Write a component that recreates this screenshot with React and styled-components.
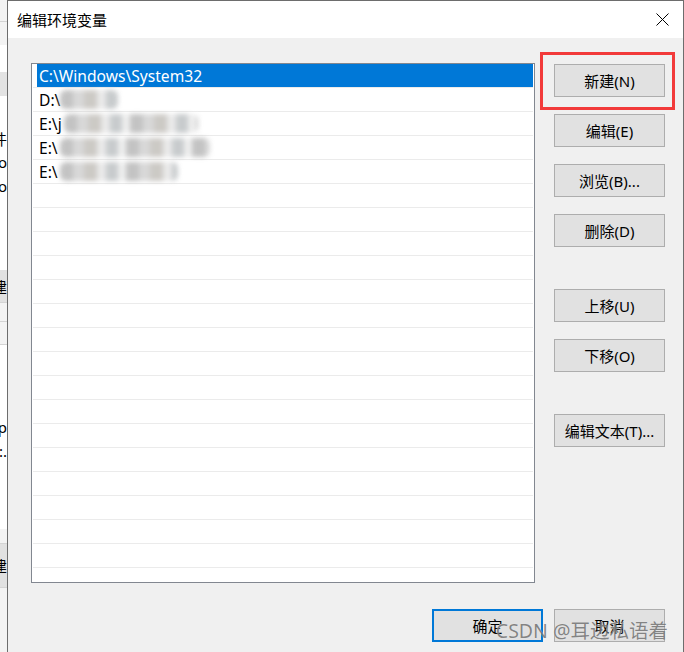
import React from "react";
import styled, { createGlobalStyle } from "styled-components";

const GlobalStyle = createGlobalStyle`
  html, body {
    margin: 0;
    padding: 0;
    background: #f0f0f0;
  }
  * {
    box-sizing: border-box;
  }
`;

const FONT = `"Noto Sans", "Noto Sans CJK SC", sans-serif`;

let Screen = styled.div`
  position: relative;
  display: flex;
  width: 684px;
  height: 652px;
  overflow: hidden;
  font-family: ${FONT};
  background: #f0f0f0;
`;

// 뒤에 깔린 창 일부
let Behind = styled.div`
  width: 7px;
  flex: none;
  display: flex;
  flex-direction: column;
  overflow: hidden;
  background: #f3f3f3;
`;

let BehindRow = styled.div`
  height: ${(props) => props.$h}px;
  flex: none;
  display: flex;
  align-items: center;
  justify-content: flex-end;
  white-space: nowrap;
  overflow: hidden;
  font-size: 15px;
  color: #000;
  background: ${(props) => props.$bg || "transparent"};
  border-bottom: ${(props) => (props.$line ? "1px solid #d4d4d4" : "none")};
`;

let Dialog = styled.div`
  flex: 1;
  display: flex;
  flex-direction: column;
  border: 1px solid #6d6d6d;
  border-bottom: none;
`;

let TitleBar = styled.div`
  height: 37px;
  flex: none;
  display: flex;
  align-items: center;
  justify-content: space-between;
  padding: 0 14px 0 9px;
  background: #fff;
`;

let Title = styled.span`
  font-size: 15px;
  color: #000;
  line-height: 1;
  margin-top: 1px;
`;

let Body = styled.div`
  flex: 1;
  display: grid;
  grid-template-columns: 504px 111px;
  grid-template-rows: 520px 33px;
  column-gap: 19px;
  row-gap: 26px;
  padding: 25px 0 0 23px;
  background: #f0f0f0;
`;

let ListBox = styled.div`
  border: 1px solid #828790;
  background: #fff;
  padding: 0 1px;
  overflow: hidden;
`;

let Row = styled.div`
  height: 24px;
  display: flex;
  padding-left: 4px;
  border-bottom: 1px solid #ebebeb;
`;

let Item = styled.div`
  flex: 1;
  display: flex;
  align-items: center;
  padding-left: 2px;
  font-size: 15.6px;
  white-space: nowrap;
  color: ${(props) => (props.$selected ? "#fff" : "#000")};
  background: ${(props) => (props.$selected ? "#0078d7" : "transparent")};
`;

let Smudge = styled.span`
  display: inline-block;
  width: ${(props) => props.$w}px;
  height: 19px;
  margin-left: ${(props) => props.$ml || 0}px;
  border-radius: 6px;
  background: repeating-linear-gradient(
    90deg,
    #b9b9b9 0 13px,
    #d2d2d2 13px 24px,
    #c4c1bc 24px 37px,
    #e6e6e6 37px 46px,
    #bfc3c5 46px 58px,
    #ececec 58px 66px
  );
  filter: blur(2.5px);
  opacity: 0.85;
`;

let ButtonColumn = styled.div`
  display: flex;
  flex-direction: column;
  gap: 17px;
  padding-top: 1px;
`;

let Marked = styled.div`
  position: relative;

  &::after {
    content: "";
    position: absolute;
    top: -12px;
    left: -14px;
    right: -10px;
    bottom: -13px;
    border: 3px solid #f23a3a;
    pointer-events: none;
  }
`;

let PushButton = styled.button`
  width: 111px;
  height: 33px;
  flex: none;
  margin-top: ${(props) => (props.$spaced ? 25 : 0)}px;
  padding: 0;
  background: #e1e1e1;
  border: ${(props) =>
    props.$primary ? "2px solid #0078d7" : "1px solid #adadad"};
  font-family: ${FONT};
  font-size: 15px;
  color: #000;
`;

let Footer = styled.div`
  grid-column: 1 / 3;
  display: flex;
  justify-content: flex-end;
  gap: 11px;
`;

let Watermark = styled.div`
  position: absolute;
  right: 16px;
  bottom: 8px;
  font-family: ${FONT};
  font-size: 19.5px;
  color: rgba(95, 95, 95, 0.75);
  text-shadow: 0 0 1px rgba(255, 255, 255, 0.6);
  pointer-events: none;
`;

const paths = [
  { text: "C:\\Windows\\System32", selected: true },
  { text: "D:\\", smudge: [58, 0] },
  { text: "E:\\j", smudge: [134, 2] },
  { text: "E:\\", smudge: [150, 2] },
  { text: "E:\\", smudge: [118, 2] },
];

const sideButtons = [
  { label: "新建(N)", marked: true },
  { label: "编辑(E)" },
  { label: "浏览(B)..." },
  { label: "删除(D)" },
  { label: "上移(U)", spaced: true },
  { label: "下移(O)" },
  { label: "编辑文本(T)...", spaced: true },
];

const behindRows = [
  { h: 22, line: true },
  { h: 23 },
  { h: 27, bg: "#fff" },
  { h: 24, bg: "#e3e3e3" },
  { h: 30, bg: "#fff" },
  { h: 24, bg: "#fff", text: "件" },
  { h: 24, bg: "#fff", text: "Lo" },
  { h: 24, bg: "#fff", text: "Lo" },
  { h: 72, bg: "#fff" },
  { h: 33, bg: "#e1e1e1", text: "建", line: true },
  { h: 19, line: true },
  { h: 23, line: true },
  { h: 70, bg: "#fff" },
  { h: 24, bg: "#fff", text: "Op" },
  { h: 24, bg: "#fff", text: ":." },
  { h: 66, bg: "#fff" },
  { h: 15, line: true },
  { h: 44, bg: "#e1e1e1", text: "建", line: true },
  { h: 40 },
];

const App = () => {
  let rows = [];
  for (let i = 0; i < 22; i++) {
    rows.push(paths[i] || { text: "" });
  }

  return (
    <>
      <GlobalStyle />
      <Screen>
        <Behind>
          {behindRows.map((r, i) => (
            <BehindRow key={i} $h={r.h} $bg={r.bg} $line={r.line}>
              {r.text}
            </BehindRow>
          ))}
        </Behind>

        <Dialog>
          <TitleBar>
            <Title>编辑环境变量</Title>
            <svg width="13" height="13" viewBox="0 0 13 13">
              <path
                d="M0.5 0.5 L12.5 12.5 M12.5 0.5 L0.5 12.5"
                stroke="#000"
                strokeWidth="1"
                fill="none"
              />
            </svg>
          </TitleBar>

          <Body>
            <ListBox>
              {rows.map((p, i) => (
                <Row key={i}>
                  <Item $selected={p.selected}>
                    {p.text}
                    {p.smudge && <Smudge $w={p.smudge[0]} $ml={p.smudge[1]} />}
                  </Item>
                </Row>
              ))}
            </ListBox>

            <ButtonColumn>
              {sideButtons.map((b) =>
                b.marked ? (
                  <Marked key={b.label}>
                    <PushButton>{b.label}</PushButton>
                  </Marked>
                ) : (
                  <PushButton key={b.label} $spaced={b.spaced}>
                    {b.label}
                  </PushButton>
                )
              )}
            </ButtonColumn>

            <Footer>
              <PushButton $primary>确定</PushButton>
              <PushButton>取消</PushButton>
            </Footer>
          </Body>
        </Dialog>

        <Watermark>CSDN @耳边私语着</Watermark>
      </Screen>
    </>
  );
};

export default App;
